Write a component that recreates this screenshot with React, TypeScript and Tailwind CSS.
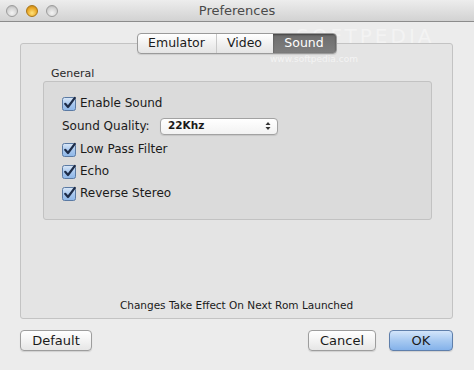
import React from "react";

function CheckBox() {
  return (
    <svg width="15" height="15" viewBox="0 0 15 15" className="shrink-0">
      <defs>
        <linearGradient id="cbg" x1="0" y1="0" x2="0" y2="1">
          <stop offset="0" stopColor="#dbe8f7" />
          <stop offset="0.5" stopColor="#a9c8ee" />
          <stop offset="1" stopColor="#8db6e8" />
        </linearGradient>
      </defs>
      <rect x="0.5" y="1.5" width="13" height="13" rx="2" fill="url(#cbg)" stroke="#5b7aa3" />
      <path d="M3.2 7.8 L6 11 L12.8 1.8" fill="none" stroke="#1d2c48" strokeWidth="2.2" strokeLinecap="round" strokeLinejoin="round" />
    </svg>
  );
}

function Light({ color }: { color: "gray" | "yellow" }) {
  const cls =
    color === "yellow"
      ? "bg-[radial-gradient(circle_at_50%_70%,#ffe27a,#e8a524_60%,#b77a12)] border-[#a97516]"
      : "bg-[radial-gradient(circle_at_50%_70%,#f4f4f4,#d2d2d2_60%,#a9a9a9)] border-[#9c9c9c]";
  return <div className={`w-[12px] h-[12px] rounded-full border ${cls}`} />;
}

function CheckRow({ label }: { label: string }) {
  return (
    <div className="h-[22px] flex items-center gap-[3px]">
      <CheckBox />
      <span className="text-[12px] text-[#1a1a1a]">{label}</span>
    </div>
  );
}

function Button({ label, w, primary }: { label: string; w: string; primary?: boolean }) {
  return (
    <div
      className={`${w} h-[21px] rounded-[4px] border flex items-center justify-center text-[13px] text-[#1a1a1a] shadow-[0_1px_1px_rgba(0,0,0,0.12)] ${
        primary
          ? "border-[#5f7fab] bg-[linear-gradient(#d3e5fa,#a7c9f1_50%,#84b2ea)]"
          : "border-[#9d9d9d] bg-[linear-gradient(#ffffff,#f3f3f3_50%,#e6e6e6)]"
      }`}
    >
      {label}
    </div>
  );
}

export default function App() {
  return (
    <div className="w-[474px] h-[370px] bg-[#ececec] flex flex-col overflow-hidden font-['DejaVu_Sans',sans-serif] relative">
      <div className="h-[22px] shrink-0 relative flex items-center justify-center bg-[linear-gradient(#ededed,#d2d2d2)] border-b border-[#8c8c8c]">
        <div className="absolute left-[6px] top-[5px] flex gap-[8px]">
          <Light color="gray" />
          <Light color="yellow" />
          <Light color="gray" />
        </div>
        <span className="text-[13px] text-[#4a4a4a]">Preferences</span>
      </div>

      <div className="flex flex-col pl-[20px] pr-[21px]">
        <div className="relative z-10 mt-[11px] flex justify-center">
          <div className="h-[21px] flex rounded-[4px] border border-[#9a9a9a] bg-[linear-gradient(#ffffff,#f1f1f1_50%,#e4e4e4)] text-[12.5px] overflow-hidden shadow-[0_1px_1px_rgba(0,0,0,0.1)]">
            <div className="w-[79px] flex items-center justify-center text-[#1a1a1a] border-r border-[#c9c9c9]">Emulator</div>
            <div className="w-[56px] flex items-center justify-center text-[#1a1a1a]">Video</div>
            <div className="w-[63px] flex items-center justify-center text-white bg-[linear-gradient(#6d6d6d,#7e7e7e)] shadow-[inset_0_1px_2px_rgba(0,0,0,0.4)]">Sound</div>
          </div>
        </div>

        <div className="-mt-[11px] h-[276px] rounded-[3px] border border-[#c3c3c3] bg-[#e4e4e4] flex flex-col pt-[23px] pl-[30px] pr-[20px]">
          <span className="text-[11px] leading-[13px] text-[#2a2a2a]">General</span>
          <div className="mt-[1px] -ml-[8px] h-[139px] rounded-[3px] border border-[#c2c2c2] bg-[#dbdbdb] pt-[10px] pl-[18px] flex flex-col">
            <CheckRow label="Enable Sound" />
            <div className="h-[24px] flex items-center">
              <span className="text-[12px] text-[#1a1a1a] w-[98px]">Sound Quality:</span>
              <div className="w-[118px] h-[17px] rounded-[4px] border border-[#a2a2a2] bg-[linear-gradient(#ffffff,#f2f2f2)] flex items-center justify-between pl-[7px] pr-[6px] shadow-[0_1px_1px_rgba(0,0,0,0.1)]">
                <span className="text-[10.5px] font-semibold text-[#1a1a1a]">22Khz</span>
                <svg width="6" height="10" viewBox="0 0 6 10">
                  <path d="M0.5 4 L3 1 L5.5 4 Z" fill="#333" />
                  <path d="M0.5 6 L3 9 L5.5 6 Z" fill="#333" />
                </svg>
              </div>
            </div>
            <CheckRow label="Low Pass Filter" />
            <CheckRow label="Echo" />
            <CheckRow label="Reverse Stereo" />
          </div>
          <div className="flex-1" />
          <div className="-ml-[10px] text-center text-[10.5px] text-[#1a1a1a] pb-[4px]">Changes Take Effect On Next Rom Launched</div>
        </div>

        <div className="mt-[11px] flex items-center">
          <Button label="Default" w="w-[72px]" />
          <div className="flex-1" />
          <Button label="Cancel" w="w-[68px]" />
          <div className="w-[13px]" />
          <Button label="OK" w="w-[64px]" primary />
        </div>
      </div>

      <div className="absolute left-[296px] top-[21px] text-[20px] tracking-[3px] text-white/40 pointer-events-none">SOFTPEDIA</div>
      <div className="absolute left-[270px] top-[53px] text-[9px] text-white/60 pointer-events-none">www.softpedia.com</div>
    </div>
  );
}
